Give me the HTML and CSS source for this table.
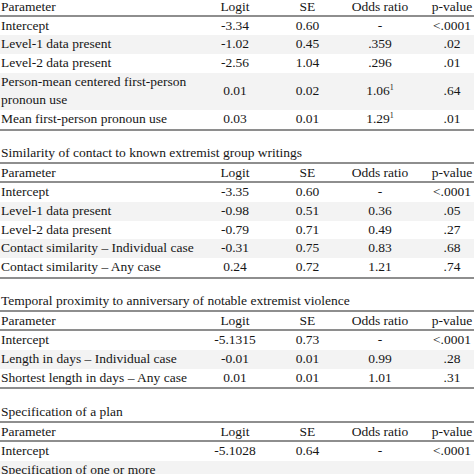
FILE: index.html
```html
<!DOCTYPE html>
<html>
<head>
<meta charset="utf-8">
<link rel="stylesheet" href="styles.css">
</head>
<body>
<div class="page">
  <table class="tbl first">
    <colgroup><col class="c-param"><col class="c-logit"><col class="c-se"><col class="c-odds"><col class="c-p"></colgroup>
    <thead><tr><th class="param">Parameter</th><th>Logit</th><th>SE</th><th>Odds ratio</th><th>p-value</th></tr></thead>
    <tbody>
      <tr><td class="param">Intercept</td><td>-3.34</td><td>0.60</td><td>-</td><td>&lt;.0001</td></tr>
      <tr class="alt"><td class="param">Level-1 data present</td><td>-1.02</td><td>0.45</td><td>.359</td><td>.02</td></tr>
      <tr><td class="param">Level-2 data present</td><td>-2.56</td><td>1.04</td><td>.296</td><td>.01</td></tr>
      <tr class="alt"><td class="param">Person-mean centered first-person pronoun use</td><td>0.01</td><td>0.02</td><td>1.06<sup>1</sup></td><td>.64</td></tr>
      <tr><td class="param">Mean first-person pronoun use</td><td>0.03</td><td>0.01</td><td>1.29<sup>1</sup></td><td>.01</td></tr>
    </tbody>
  </table>

  <div class="title">Similarity of contact to known extremist group writings</div>
  <table class="tbl">
    <colgroup><col class="c-param"><col class="c-logit"><col class="c-se"><col class="c-odds"><col class="c-p"></colgroup>
    <thead><tr><th class="param">Parameter</th><th>Logit</th><th>SE</th><th>Odds ratio</th><th>p-value</th></tr></thead>
    <tbody>
      <tr><td class="param">Intercept</td><td>-3.35</td><td>0.60</td><td>-</td><td>&lt;.0001</td></tr>
      <tr class="alt"><td class="param">Level-1 data present</td><td>-0.98</td><td>0.51</td><td>0.36</td><td>.05</td></tr>
      <tr><td class="param">Level-2 data present</td><td>-0.79</td><td>0.71</td><td>0.49</td><td>.27</td></tr>
      <tr class="alt"><td class="param">Contact similarity – Individual case</td><td>-0.31</td><td>0.75</td><td>0.83</td><td>.68</td></tr>
      <tr><td class="param">Contact similarity – Any case</td><td>0.24</td><td>0.72</td><td>1.21</td><td>.74</td></tr>
    </tbody>
  </table>

  <div class="title">Temporal proximity to anniversary of notable extremist violence</div>
  <table class="tbl">
    <colgroup><col class="c-param"><col class="c-logit"><col class="c-se"><col class="c-odds"><col class="c-p"></colgroup>
    <thead><tr><th class="param">Parameter</th><th>Logit</th><th>SE</th><th>Odds ratio</th><th>p-value</th></tr></thead>
    <tbody>
      <tr><td class="param">Intercept</td><td>-5.1315</td><td>0.73</td><td>-</td><td>&lt;.0001</td></tr>
      <tr class="alt"><td class="param">Length in days – Individual case</td><td>-0.01</td><td>0.01</td><td>0.99</td><td>.28</td></tr>
      <tr><td class="param">Shortest length in days – Any case</td><td>0.01</td><td>0.01</td><td>1.01</td><td>.31</td></tr>
    </tbody>
  </table>

  <div class="title">Specification of a plan</div>
  <table class="tbl">
    <colgroup><col class="c-param"><col class="c-logit"><col class="c-se"><col class="c-odds"><col class="c-p"></colgroup>
    <thead><tr><th class="param">Parameter</th><th>Logit</th><th>SE</th><th>Odds ratio</th><th>p-value</th></tr></thead>
    <tbody>
      <tr><td class="param">Intercept</td><td>-5.1028</td><td>0.64</td><td>-</td><td>&lt;.0001</td></tr>
      <tr class="alt"><td class="param">Specification of one or more<br>plan elements</td><td>-1.10</td><td>0.43</td><td>3.00</td><td>.00</td></tr>
    </tbody>
  </table>
</div>
</body>
</html>
```

FILE: styles.css
```css
html, body {
  margin: 0;
  padding: 0;
  background: #ffffff;
  overflow: hidden;
}
body {
  width: 474px;
  height: 474px;
  font-family: "Liberation Serif", "Times New Roman", serif;
  font-size: 13.5px;
  color: #161616;
}
.page {
  width: 474px;
  overflow: hidden;
  margin-top: -4.5px;
}
.tbl {
  width: 487px;
  table-layout: fixed;
  border-collapse: collapse;
  border-top: 2px solid #8e8e8e;
  border-bottom: 2px solid #8e8e8e;
}
.c-param { width: 198px; }
.c-logit { width: 74px; }
.c-se { width: 71px; }
.c-odds { width: 74px; }
.c-p { width: 70px; }
.tbl th {
  font-weight: normal;
  height: 17px;
  line-height: 17px;
  padding: 0;
  text-align: center;
  border-bottom: 2px solid #8e8e8e;
}
.tbl td {
  padding: 0;
  line-height: 18.67px;
  text-align: center;
  vertical-align: middle;
}
.tbl .param {
  text-align: left;
  padding-left: 1px;
}
.tbl tr.alt td {
  background: #f3f3f3;
}
.tbl sup {
  font-size: 8px;
  line-height: 0;
  vertical-align: 5px;
}
.title {
  margin-top: 12.67px;
  line-height: 19px;
  padding-left: 1px;
}
```
